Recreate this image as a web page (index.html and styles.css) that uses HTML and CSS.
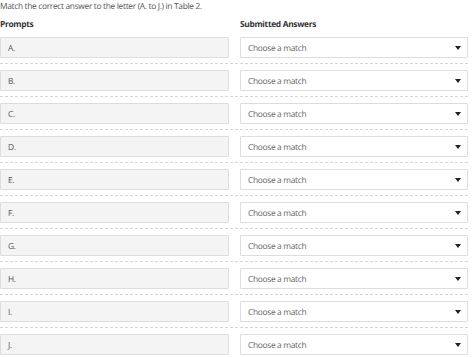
FILE: index.html
```html
<!doctype html>
<html lang="en">
  <head>
    <meta charset="UTF-8" />
    <title>Match the answers</title>
    <link rel="stylesheet" href="styles.css">
  </head>
  <body>
    <p class="intro">Match the correct answer to the letter (A. to J.) in Table 2.</p>

    <div class="match-table">
      <div class="head">
        <span>Prompts</span>
        <span>Submitted Answers</span>
      </div>

      <div class="row">
        <div class="prompt">A.</div>
        <div class="answer"><span>Choose a match</span><span class="caret"></span></div>
      </div>
      <div class="row">
        <div class="prompt">B.</div>
        <div class="answer"><span>Choose a match</span><span class="caret"></span></div>
      </div>
      <div class="row">
        <div class="prompt">C.</div>
        <div class="answer"><span>Choose a match</span><span class="caret"></span></div>
      </div>
      <div class="row">
        <div class="prompt">D.</div>
        <div class="answer"><span>Choose a match</span><span class="caret"></span></div>
      </div>
      <div class="row">
        <div class="prompt">E.</div>
        <div class="answer"><span>Choose a match</span><span class="caret"></span></div>
      </div>
      <div class="row">
        <div class="prompt">F.</div>
        <div class="answer"><span>Choose a match</span><span class="caret"></span></div>
      </div>
      <div class="row">
        <div class="prompt">G.</div>
        <div class="answer"><span>Choose a match</span><span class="caret"></span></div>
      </div>
      <div class="row">
        <div class="prompt">H.</div>
        <div class="answer"><span>Choose a match</span><span class="caret"></span></div>
      </div>
      <div class="row">
        <div class="prompt">I.</div>
        <div class="answer"><span>Choose a match</span><span class="caret"></span></div>
      </div>
      <div class="row">
        <div class="prompt">J.</div>
        <div class="answer"><span>Choose a match</span><span class="caret"></span></div>
      </div>
    </div>
  </body>
</html>
```

FILE: styles.css
```css
body {
  margin: 0;
  font-family: "Open Sans", sans-serif;
  font-size: 8.4px;
  letter-spacing: -0.32px;
  text-rendering: geometricPrecision;
  color: #444;
  background: #fff;
  width: 468px;
}
.intro {
  margin: 0;
  padding-top: 1px;
  line-height: 11px;
  color: #555;
}
.head {
  display: grid;
  grid-template-columns: 229px 1fr;
  column-gap: 11px;
  margin-top: 7px;
  line-height: 12px;
  font-weight: 700;
  color: #333;
}
.row {
  display: grid;
  grid-template-columns: 229px 1fr;
  column-gap: 11px;
  padding: 6px 0 5px;
  border-bottom: 1px dashed #d6d6d6;
}
.prompt,
.answer {
  box-sizing: border-box;
  height: 21px;
  border: 1px solid #dddddd;
  border-radius: 1px;
  display: flex;
  align-items: center;
  padding: 1px 7px 0;
}
.prompt {
  background: #f4f4f4;
  color: #555;
}
.answer {
  background: #fff;
  color: #666;
  justify-content: space-between;
  padding-right: 6px;
}
.caret {
  width: 0;
  height: 0;
  border-left: 3px solid transparent;
  border-right: 3px solid transparent;
  border-top: 4px solid #222;
}
```
